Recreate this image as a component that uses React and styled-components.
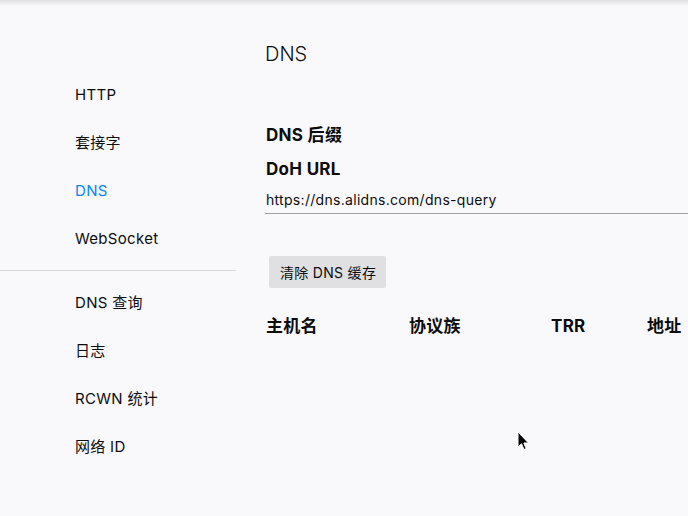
import React from "react";
import styled, { createGlobalStyle } from "styled-components";

const Global = createGlobalStyle`
  html, body { margin: 0; padding: 0; }
  body {
    width: 688px;
    height: 516px;
    overflow: hidden;
    background: linear-gradient(#dedee0 0px, #f9f9fb 6px) no-repeat, #f9f9fb;
    font-family: Inter, "Noto Sans CJK SC", sans-serif;
    color: #0c0c0d;
    letter-spacing: 0.3px;
  }
`;

const Page = styled.div`
  display: flex;
  height: 516px;
  position: relative;
`;

const Sidebar = styled.nav`
  width: 236px;
  flex: none;
  padding-top: 71px;
  display: flex;
  flex-direction: column;
`;

const NavItem = styled.div`
  height: 48px;
  line-height: 48px;
  padding-left: 75px;
  font-size: 15px;
  color: ${(p) => (p.$active ? "#0a84ff" : "#0c0c0d")};
`;

const Divider = styled.hr`
  margin: 7px 0 8px;
  border: none;
  border-top: 1px solid #d7d7db;
  height: 0;
`;

const Main = styled.main`
  flex: 1;
  min-width: 0;
  padding-left: 29px;
  display: flex;
  flex-direction: column;
  align-items: flex-start;
`;

const Title = styled.h1`
  margin: 40px 0 0;
  font-size: 20px;
  font-weight: 300;
  line-height: 29px;
  letter-spacing: 0;
`;

const Heading = styled.h2`
  margin: ${(p) => p.$mt}px 0 0 1px;
  font-size: 17px;
  font-weight: 700;
  line-height: 24px;
`;

const UrlInput = styled.div`
  margin-top: 5px;
  align-self: stretch;
  height: 27px;
  line-height: 27px;
  border-bottom: 1px solid #a0a0a4;
  padding-left: 1px;
  font-size: 14px;
  white-space: nowrap;
  overflow: hidden;
`;

const Button = styled.button`
  margin: 42px 0 0 4px;
  height: 32px;
  padding: 0 10px 0 11px;
  border: none;
  border-radius: 2px;
  background: #e0e0e2;
  font-family: inherit;
  letter-spacing: inherit;
  font-size: 14px;
  color: #0c0c0d;
`;

const TableHead = styled.div`
  margin-top: 26px;
  display: grid;
  grid-template-columns: 143px 142px 96px 41px;
  padding-left: 1px;
  font-size: 17px;
  font-weight: 700;
  line-height: 24px;
  white-space: nowrap;
  overflow: hidden;
`;

const Cursor = styled.svg`
  position: absolute;
  left: 517px;
  top: 431px;
`;

const topItems = ["HTTP", "套接字", "DNS", "WebSocket"];
const bottomItems = ["DNS 查询", "日志", "RCWN 统计", "网络 ID"];

export default function App() {
  return (
    <>
      <Global />
      <Page>
        <Sidebar>
          {topItems.map((t) => (
            <NavItem key={t} $active={t === "DNS"}>
              {t}
            </NavItem>
          ))}
          <Divider />
          {bottomItems.map((t) => (
            <NavItem key={t}>{t}</NavItem>
          ))}
        </Sidebar>
        <Main>
          <Title>DNS</Title>
          <Heading $mt={54}>DNS 后缀</Heading>
          <Heading $mt={10}>DoH URL</Heading>
          <UrlInput>https://dns.alidns.com/dns-query</UrlInput>
          <Button>清除 DNS 缓存</Button>
          <TableHead>
            <span>主机名</span>
            <span>协议族</span>
            <span>TRR</span>
            <span>地址</span>
          </TableHead>
        </Main>
        <Cursor width="14" height="21" viewBox="0 0 14 21">
          <path
            d="M1 1 L1 16 L4.5 12.8 L7 18.5 L9.2 17.6 L6.8 12 L11.5 12 Z"
            fill="#000"
            stroke="#fff"
            strokeWidth="1"
            strokeLinejoin="round"
          />
        </Cursor>
      </Page>
    </>
  );
}
